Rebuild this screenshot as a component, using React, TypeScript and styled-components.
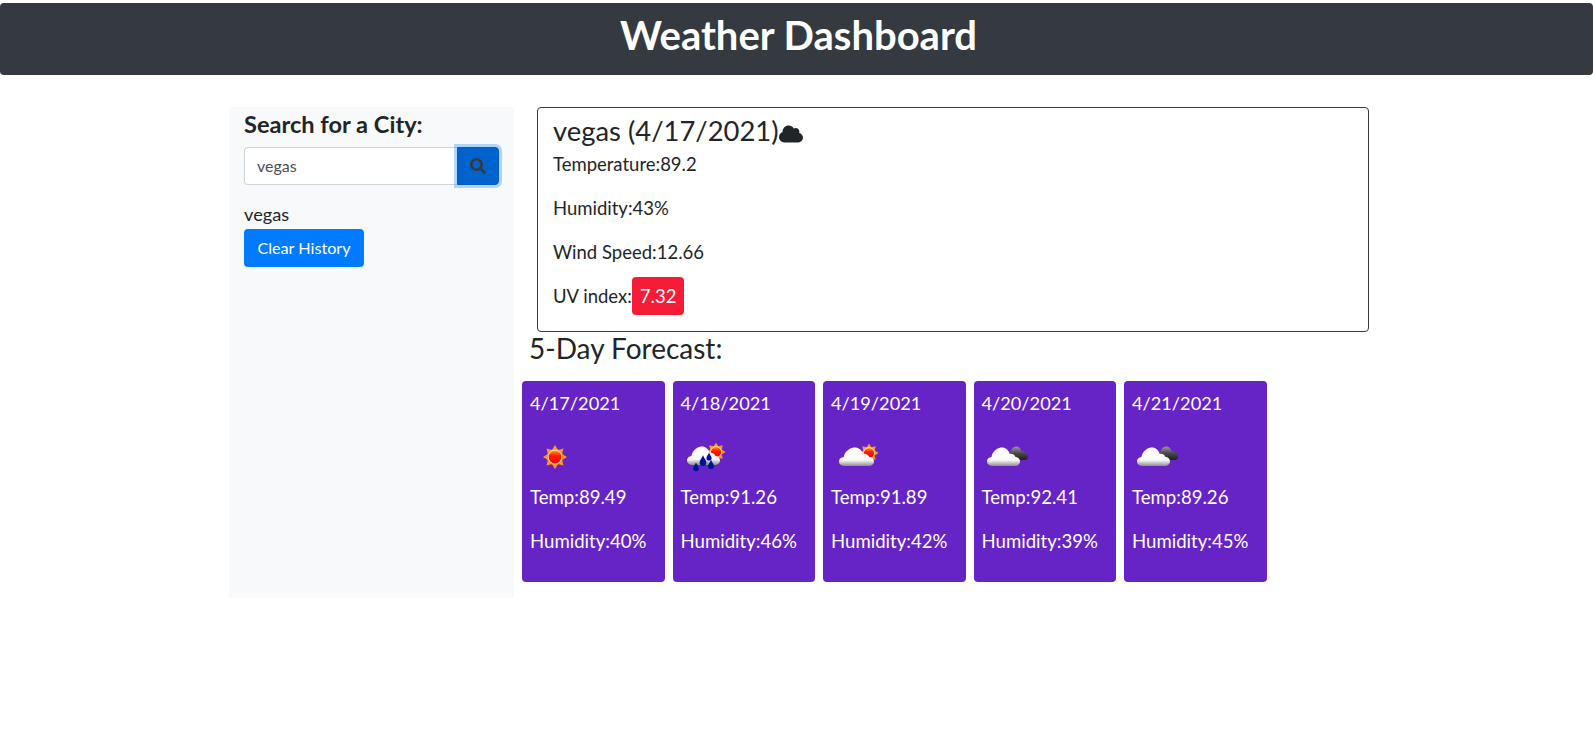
import React from 'react'
import styled, { createGlobalStyle } from 'styled-components'
import { FaCloud, FaSearch } from 'react-icons/fa'

const GlobalStyle = createGlobalStyle`
  html, body {
    margin: 0;
    background: #fff;
    color: #212529;
    font-family: Lato, 'Liberation Sans', sans-serif;
    font-size: 16px;
    line-height: 1.5;
  }
  * {
    box-sizing: border-box;
  }
`

const Page = styled.div`
  width: 1593px;
  height: 746px;
  overflow: hidden;
  padding-top: 3px;
`

const Header = styled.header`
  height: 72px;
  margin-bottom: 32px;
  padding: 0 0 8px 4px;
  background: #343a40;
  border-radius: 4px;
  display: flex;
  align-items: center;
  justify-content: center;
`

const Title = styled.h1`
  margin: 0;
  color: #fff;
  font-size: 40px;
  font-weight: 700;
  line-height: 1.2;
`

const Row = styled.div`
  display: flex;
  align-items: stretch;
  padding-left: 229px;
`

const Sidebar = styled.aside`
  width: 285px;
  padding: 0 15px;
  background: #f8f9fa;
`

const SearchTitle = styled.h4`
  margin: 0 0 8px;
  padding-top: 3px;
  font-size: 23.6px;
  font-weight: 700;
  line-height: 1.2;
  height: 32px;
`

const SearchGroup = styled.div`
  display: flex;
  width: 255px;
  height: 38px;
`

const SearchInput = styled.input`
  width: 213px;
  height: 38px;
  padding: 5px 12px 7px;
  border: 1px solid #ced4da;
  border-right: 0;
  border-radius: 4px 0 0 4px;
  background: #fff;
  color: #495057;
  font-family: inherit;
  font-size: 16px;
  outline: none;
`

const SearchButton = styled.button`
  width: 42px;
  height: 38px;
  padding: 0;
  border: 1px solid #005cbf;
  border-radius: 0 4px 4px 0;
  background: #0062cc;
  color: #343a40;
  font-size: 16px;
  display: flex;
  align-items: center;
  justify-content: center;
  box-shadow: 0 0 0 3px rgba(38, 143, 255, 0.35);
`

const HistoryItem = styled.div`
  margin-top: 15px;
  margin-bottom: 1px;
  font-size: 18.2px;
  line-height: 28px;
`

const ClearButton = styled.button`
  display: block;
  width: 120px;
  height: 38px;
  padding: 0 0 2px;
  border: 0;
  border-radius: 4px;
  background: #007bff;
  color: #fff;
  font-family: inherit;
  font-size: 16.2px;
`

const Main = styled.main`
  flex: none;
  padding: 0 0 16px 8px;
`

const Summary = styled.section`
  width: 832px;
  height: 225px;
  margin-left: 15px;
  padding: 6px 15px 0;
  border: 1px solid #343a40;
  border-radius: 4px;
`

const CityLine = styled.h3`
  margin: 0 0 2px;
  font-size: 27.4px;
  font-weight: 400;
  line-height: 34px;
  display: flex;
  align-items: center;

  svg {
    font-size: 24px;
    margin-top: 6px;
  }
`

const Stat = styled.p`
  margin: 0 0 16px;
  font-size: 18.5px;
  line-height: 28px;
`

const UvBadge = styled.span<{ $level: string }>`
  display: inline-block;
  height: 38px;
  margin: -5px 0;
  padding: 0 8px;
  border-radius: 4px;
  background: ${({ $level }) => ($level === 'high' ? '#f61c37' : '#28a745')};
  color: #fff;
  line-height: 38px;
`

const ForecastTitle = styled.h3`
  margin: -3px 0 14px 7px;
  font-size: 28px;
  font-weight: 400;
  line-height: 38px;
`

const CardRow = styled.div`
  display: flex;
  gap: 8px;
`

const DayCard = styled.div`
  width: 142.5px;
  height: 201px;
  padding: 8px;
  border-radius: 4px;
  background: #6624c6;
  color: #fff;
`

const DayDate = styled.div`
  font-size: 18.2px;
  line-height: 28px;
`

const IconSlot = styled.div`
  height: 50px;
  margin: 15px 0 1px;

  svg {
    display: block;
    width: 50px;
    height: 50px;
  }
`

const DayStat = styled.p`
  margin: 0 0 16px;
  font-size: 18.6px;
  line-height: 28px;
`

const IconDefs = () => (
  <svg width="0" height="0" style={{ position: 'absolute' }}>
    <defs>
      <linearGradient id="cloudFill" x1="0" y1="0" x2="0" y2="1">
        <stop offset="0" stopColor="#ffffff" />
        <stop offset="0.68" stopColor="#fafafa" />
        <stop offset="1" stopColor="#8d8d8d" />
      </linearGradient>
      <linearGradient id="darkFill" x1="0" y1="0" x2="0" y2="1">
        <stop offset="0" stopColor="#9a9a9a" />
        <stop offset="0.5" stopColor="#4a4a4a" />
        <stop offset="1" stopColor="#1e1e1e" />
      </linearGradient>
      <linearGradient id="sunFill" x1="0" y1="0" x2="0" y2="1">
        <stop offset="0" stopColor="#ff9a1c" />
        <stop offset="0.4" stopColor="#ff1a00" />
        <stop offset="1" stopColor="#ff0000" />
      </linearGradient>
    </defs>
  </svg>
)

const rays = [0, 45, 90, 135, 180, 225, 270, 315]

const Sun = ({ cx, cy, scale = 1 }: { cx: number; cy: number; scale?: number }) => (
  <g transform={`translate(${cx} ${cy}) scale(${scale})`}>
    {rays.map((a) => (
      <polygon key={a} points="-3,-7 0,-12 3,-7" fill="#ff9a1c" transform={`rotate(${a})`} />
    ))}
    <circle r="8" fill="#ff9a1c" />
    <circle r="7.2" fill="#ffe9c4" />
    <circle r="6.4" fill="url(#sunFill)" />
  </g>
)

const Cloud = ({ x, y, w, h, fill }: { x: number; y: number; w: number; h: number; fill: string }) => (
  <path
    transform={`translate(${x} ${y}) scale(${w / 34} ${h / 19})`}
    d="M5 19C2 19 0 17 0 14.3 0 11.8 2 10 4.6 9.9 5.4 6 8 2.4 12.6 1 17.4-.6 22 2.2 23.4 7 26 6.2 28.6 7.6 29.4 10 32 10 34 12 34 14.6 34 17 32 19 29.4 19Z"
    fill={fill}
  />
)

const Drop = ({ x, y, r }: { x: number; y: number; r: number }) => (
  <path
    d={`M${x} ${y - r * 2.1}C${x + r * 0.5} ${y - r} ${x + r} ${y - r * 0.5} ${x + r} ${y}A${r} ${r} 0 0 1 ${x - r} ${y}C${x - r} ${y - r * 0.5} ${x - r * 0.5} ${y - r} ${x} ${y - r * 2.1}Z`}
    fill="#00119a"
  />
)

const WeatherIcon = ({ kind }: { kind: string }) => {
  if (kind === 'sun') {
    return (
      <svg viewBox="0 0 50 50">
        <Sun cx={25} cy={25} />
      </svg>
    )
  }
  if (kind === 'rain') {
    return (
      <svg viewBox="0 0 50 50">
        <Sun cx={35} cy={20} scale={0.8} />
        <Cloud x={6} y={14} w={33} h={19} fill="url(#cloudFill)" />
        <Drop x={15} y={36.5} r={2.8} />
        <Drop x={22} y={30.5} r={3.4} />
        <Drop x={28} y={26} r={2.6} />
        <Drop x={30} y={34} r={3} />
      </svg>
    )
  }
  if (kind === 'few') {
    return (
      <svg viewBox="0 0 50 50">
        <Sun cx={38} cy={21} scale={0.8} />
        <Cloud x={8} y={15} w={35} h={19} fill="url(#cloudFill)" />
      </svg>
    )
  }
  return (
    <svg viewBox="0 0 50 50">
      <Cloud x={25} y={14} w={21} h={14} fill="url(#darkFill)" />
      <Cloud x={5} y={15} w={33} h={19} fill="url(#cloudFill)" />
    </svg>
  )
}

const forecast = [
  { date: '4/17/2021', icon: 'sun', temp: '89.49', humidity: '40%' },
  { date: '4/18/2021', icon: 'rain', temp: '91.26', humidity: '46%' },
  { date: '4/19/2021', icon: 'few', temp: '91.89', humidity: '42%' },
  { date: '4/20/2021', icon: 'broken', temp: '92.41', humidity: '39%' },
  { date: '4/21/2021', icon: 'broken', temp: '89.26', humidity: '45%' },
]

export default function App() {
  return (
    <Page>
      <GlobalStyle />
      <IconDefs />
      <Header>
        <Title>Weather Dashboard</Title>
      </Header>
      <Row>
        <Sidebar>
          <SearchTitle>Search for a City:</SearchTitle>
          <SearchGroup>
            <SearchInput defaultValue="vegas" />
            <SearchButton aria-label="Search">
              <FaSearch />
            </SearchButton>
          </SearchGroup>
          <HistoryItem>vegas</HistoryItem>
          <ClearButton>Clear History</ClearButton>
        </Sidebar>
        <Main>
          <Summary>
            <CityLine>
              vegas (4/17/2021)
              <FaCloud />
            </CityLine>
            <Stat>Temperature:89.2</Stat>
            <Stat>Humidity:43%</Stat>
            <Stat>Wind Speed:12.66</Stat>
            <Stat>
              UV index:<UvBadge $level="high">7.32</UvBadge>
            </Stat>
          </Summary>
          <ForecastTitle>5-Day Forecast:</ForecastTitle>
          <CardRow>
            {forecast.map((day) => (
              <DayCard key={day.date}>
                <DayDate>{day.date}</DayDate>
                <IconSlot>
                  <WeatherIcon kind={day.icon} />
                </IconSlot>
                <DayStat>Temp:{day.temp}</DayStat>
                <DayStat>Humidity:{day.humidity}</DayStat>
              </DayCard>
            ))}
          </CardRow>
        </Main>
      </Row>
    </Page>
  )
}
